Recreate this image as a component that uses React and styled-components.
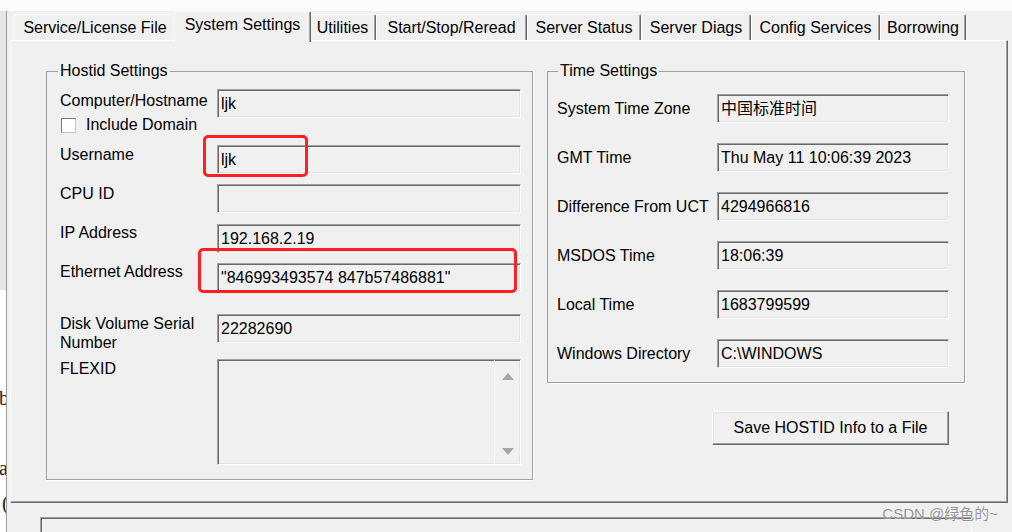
import React from 'react';
import styled, { createGlobalStyle } from 'styled-components';

const GlobalStyle = createGlobalStyle`
  html, body {
    margin: 0;
    padding: 0;
    background: #fbfbfb;
  }
  body {
    font-family: "Liberation Sans", Arial, "Noto Sans CJK SC", sans-serif;
    font-size: 16px;
    color: #000;
  }
  * {
    box-sizing: border-box;
  }
`;

// --- page frame ---

const Screen = styled.div`
  width: 1012px;
  height: 532px;
  overflow: hidden;
  display: flex;
  flex-direction: column;
  background: #fbfbfb;
`;

const TopStrip = styled.div`
  height: 11px;
  flex: none;
  background: #fbfbfb;
`;

const Body = styled.div`
  flex: 1;
  display: flex;
  min-height: 0;
`;

const SideStrip = styled.div`
  width: 7px;
  flex: none;
  display: flex;
  flex-direction: column;
  border-right: 1px solid #9c9c9c;
  overflow: hidden;
`;

const SideShade = styled.div`
  height: 279px;
  flex: none;
  background: #e6e6e6;
`;

const SidePage = styled.div`
  flex: 1;
  background: #fff;
  display: flex;
  flex-direction: column;
`;

const SideGlyph = styled.span`
  font-family: "Liberation Serif", "Times New Roman", serif;
  font-size: 20px;
  line-height: 20px;
  color: #222;
  margin-top: ${p => p.$top}px;
  margin-left: ${p => p.$left}px;
`;

const Window = styled.div`
  flex: 1;
  min-width: 0;
  position: relative;
  background: #f0f0f0;
  padding-left: 3px;
  display: flex;
  flex-direction: column;
`;

// --- tabs ---

const TabStrip = styled.div`
  height: 29px;
  flex: none;
  display: flex;
  align-items: flex-end;
  padding-left: 4px;
  position: relative;
  z-index: 2;
`;

const Tab = styled.div`
  width: ${p => p.$w + (p.$active ? 4 : 0)}px;
  height: ${p => (p.$active ? 31 : 26)}px;
  margin: 0 ${p => (p.$active ? -2 : 0)}px ${p => (p.$active ? -2 : 0)}px;
  padding-bottom: ${p => (p.$active ? 5 : 0)}px;
  background: #f0f0f0;
  border-top: 1px solid #fff;
  border-left: 1px solid #fff;
  border-right: 1px solid #696969;
  box-shadow: inset -1px 0 0 #a0a0a0;
  border-radius: 2px 2px 0 0;
  display: flex;
  align-items: center;
  justify-content: center;
  white-space: nowrap;
  line-height: 18px;
  position: relative;
  z-index: ${p => (p.$active ? 1 : 0)};
`;

const Panel = styled.div`
  height: 463px;
  flex: none;
  margin-right: 4px;
  border-top: 1px solid #fff;
  border-left: 1px solid #fff;
  border-right: 1px solid #696969;
  border-bottom: 1px solid #696969;
  box-shadow: inset -1px -1px 0 #a0a0a0;
  display: flex;
  align-items: flex-start;
  gap: 14px;
  padding: 21px 0 0 35px;
`;

// --- group boxes ---

const Group = styled.fieldset`
  margin: 0;
  min-width: 0;
  width: ${p => p.$w}px;
  border: 1px solid #a0a0a0;
  box-shadow: 1px 1px 0 #fff;
  padding: ${p => p.$pt}px ${p => p.$pr}px 14px ${p => p.$pl}px;
  display: flex;
  flex-direction: column;
  gap: ${p => p.$gap || 0}px;
`;

const Legend = styled.legend`
  padding: 0 2px;
  margin-left: ${p => p.$ml}px;
  line-height: 18px;
`;

const FieldRow = styled.div`
  display: grid;
  grid-template-columns: ${p => p.$cols};
  height: ${p => p.$h}px;
  align-items: ${p => p.$align || 'start'};
`;

const Label = styled.div`
  line-height: ${p => p.$lh || 18}px;
  padding-top: ${p => p.$pt || 0}px;
  white-space: nowrap;
`;

const Field = styled.div`
  position: relative;
  height: 29px;
  border: 1px solid;
  border-color: #a0a0a0 #fff #fff #a0a0a0;
  box-shadow: inset 1px 1px 0 #696969, inset -1px -1px 0 #e3e3e3;
  background: #f0f0f0;
  padding: 0 3px;
  display: flex;
  align-items: center;
  line-height: 18px;
  white-space: nowrap;
`;

const TextBox = styled.div`
  height: 106px;
  border: 1px solid;
  border-color: #a0a0a0 #fff #fff #a0a0a0;
  box-shadow: inset 1px 1px 0 #696969, inset -1px -1px 0 #e3e3e3;
  background: #f0f0f0;
  display: flex;
  justify-content: flex-end;
`;

const ScrollBar = styled.div`
  width: 26px;
  border-left: 1px solid #fafafa;
  display: flex;
  flex-direction: column;
  justify-content: space-between;
  align-items: center;
  padding: 13px 0 9px;
`;

const Arrow = styled.span`
  width: 0;
  height: 0;
  border-left: 6px solid transparent;
  border-right: 6px solid transparent;
  ${p => (p.$down ? 'border-top' : 'border-bottom')}: 7px solid #a6a6a6;
`;

const Mark = styled.div`
  position: absolute;
  left: ${p => p.$x}px;
  top: ${p => p.$y}px;
  width: ${p => p.$w}px;
  height: ${p => p.$h}px;
  border: 3px solid #ff2121;
  border-radius: 5px;
  pointer-events: none;
`;

const CheckRow = styled.div`
  display: flex;
  align-items: center;
  gap: 10px;
  margin-top: 6px;
  margin-left: 1px;
  line-height: 18px;
`;

const CheckBox = styled.span`
  width: 15px;
  height: 15px;
  flex: none;
  background: #fff;
  border: 1px solid;
  border-color: #7a7a7a #c4c4c4 #c4c4c4 #7a7a7a;
`;

const RightColumn = styled.div`
  width: 418px;
  display: flex;
  flex-direction: column;
  align-items: flex-end;
`;

const Button = styled.button`
  width: 237px;
  height: 34px;
  margin: 28px 16px 0 0;
  padding: 0;
  font: inherit;
  color: #000;
  background: #f0f0f0;
  border: 1px solid;
  border-color: #fff #696969 #696969 #fff;
  box-shadow: inset -1px -1px 0 #a0a0a0, inset 1px 1px 0 #e3e3e3;
`;

// --- bottom ---

const BottomArea = styled.div`
  flex: 1;
  min-height: 0;
  overflow: hidden;
  padding: 14px 0 0 30px;
`;

const StatusBox = styled.div`
  width: 932px;
  height: 30px;
  border: 1px solid;
  border-color: #a0a0a0 #fff #fff #a0a0a0;
  box-shadow: inset 1px 1px 0 #696969;
`;

const Watermark = styled.div`
  position: absolute;
  right: 14px;
  bottom: 9px;
  font-size: 15px;
  line-height: 18px;
  color: rgba(120, 120, 120, 0.8);
  text-shadow: 0 0 1px #fff;
  white-space: nowrap;
`;

const tabs = [
  { name: 'Service/License File', w: 162 },
  { name: 'System Settings', w: 133, active: true },
  { name: 'Utilities', w: 67 },
  { name: 'Start/Stop/Reread', w: 151 },
  { name: 'Server Status', w: 114 },
  { name: 'Server Diags', w: 110 },
  { name: 'Config Services', w: 129 },
  { name: 'Borrowing', w: 86 },
];

const timeRows = [
  ['System Time Zone', '中国标准时间'],
  ['GMT Time', 'Thu May 11 10:06:39 2023'],
  ['Difference From UCT', '4294966816'],
  ['MSDOS Time', '18:06:39'],
  ['Local Time', '1683799599'],
  ['Windows Directory', 'C:\\WINDOWS'],
];

const HOST_COLS = '157px 304px';
const TIME_COLS = '160px 232px';

const App = () => {
  return (
    <>
      <GlobalStyle />
      <Screen>
        <TopStrip />
        <Body>
          <SideStrip>
            <SideShade />
            <SidePage>
              <SideGlyph $top={98} $left={-1}>b</SideGlyph>
              <SideGlyph $top={50} $left={-1}>a</SideGlyph>
              <SideGlyph $top={15} $left={2}>(</SideGlyph>
            </SidePage>
          </SideStrip>

          <Window>
            <TabStrip>
              {tabs.map(t => (
                <Tab key={t.name} $w={t.w} $active={t.active}>{t.name}</Tab>
              ))}
            </TabStrip>

            <Panel>
              <Group $w={487} $pt={9} $pr={11} $pl={13}>
                <Legend $ml={-2}>Hostid Settings</Legend>

                <FieldRow $cols={HOST_COLS} $h={56}>
                  <div>
                    <Label $pt={3}>Computer/Hostname</Label>
                    <CheckRow>
                      <CheckBox />
                      Include Domain
                    </CheckRow>
                  </div>
                  <Field>ljk</Field>
                </FieldRow>

                <FieldRow $cols={HOST_COLS} $h={39}>
                  <Label $pt={1}>Username</Label>
                  <Field>
                    ljk
                    <Mark $x={-15} $y={-11} $w={105} $h={42} />
                  </Field>
                </FieldRow>

                <FieldRow $cols={HOST_COLS} $h={40}>
                  <Label $pt={1}>CPU ID</Label>
                  <Field />
                </FieldRow>

                <FieldRow $cols={HOST_COLS} $h={39}>
                  <Label $pt={0}>IP Address</Label>
                  <Field>192.168.2.19</Field>
                </FieldRow>

                <FieldRow $cols={HOST_COLS} $h={51}>
                  <Label $pt={0}>Ethernet Address</Label>
                  <Field>
                    "846993493574 847b57486881"
                    <Mark $x={-20} $y={-16} $w={319} $h={45} />
                  </Field>
                </FieldRow>

                <FieldRow $cols={HOST_COLS} $h={45}>
                  <Label $lh={19}>Disk Volume Serial<br />Number</Label>
                  <Field>22282690</Field>
                </FieldRow>

                <FieldRow $cols={HOST_COLS} $h={106}>
                  <Label $pt={1}>FLEXID</Label>
                  <TextBox>
                    <ScrollBar>
                      <Arrow />
                      <Arrow $down />
                    </ScrollBar>
                  </TextBox>
                </FieldRow>
              </Group>

              <RightColumn>
                <Group $w={418} $pt={14} $pr={15} $pl={9} $gap={20}>
                  <Legend $ml={1}>Time Settings</Legend>
                  {timeRows.map(([label, value]) => (
                    <FieldRow key={label} $cols={TIME_COLS} $h={29} $align="center">
                      <Label>{label}</Label>
                      <Field>{value}</Field>
                    </FieldRow>
                  ))}
                </Group>
                <Button>Save HOSTID Info to a File</Button>
              </RightColumn>
            </Panel>

            <BottomArea>
              <StatusBox />
            </BottomArea>

            <Watermark>CSDN @绿色的~</Watermark>
          </Window>
        </Body>
      </Screen>
    </>
  );
};

export default App;
